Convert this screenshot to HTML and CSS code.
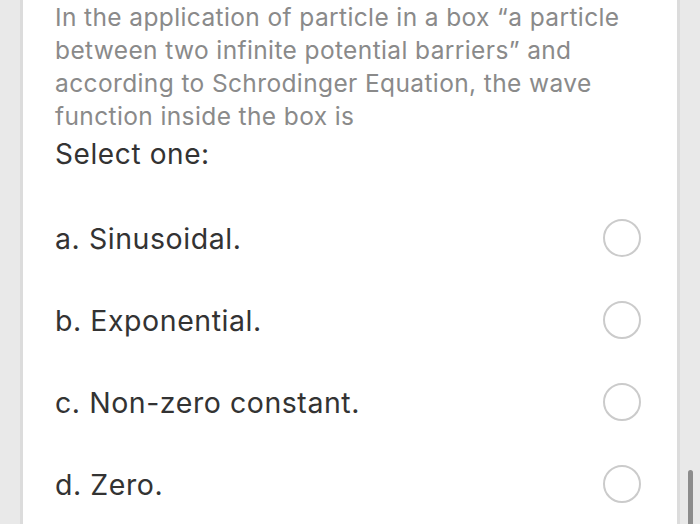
FILE: index.html
```html
<!DOCTYPE html>
<html>
<head>
<meta charset="utf-8">
<link rel="stylesheet" href="styles.css">
</head>
<body>
<div class="page">
  <div class="side side-left"></div>
  <main class="content">
    <div class="question">In the application of particle in a box “a particle between two infinite potential barriers” and according to Schrodinger Equation, the wave function inside the box is</div>
    <div class="prompt">Select one:</div>
    <div class="options">
      <div class="option"><span class="label">a. Sinusoidal.</span><span class="radio"></span></div>
      <div class="option"><span class="label">b. Exponential.</span><span class="radio"></span></div>
      <div class="option"><span class="label">c. Non-zero constant.</span><span class="radio"></span></div>
      <div class="option"><span class="label">d. Zero.</span><span class="radio"></span></div>
    </div>
  </main>
  <div class="side side-right"><div class="scrollbar"></div></div>
</div>
</body>
</html>
```
FILE: styles.css
```css
html, body {
  margin: 0;
  padding: 0;
  background: #ffffff;
}
.page {
  display: flex;
  width: 700px;
  height: 524px;
  overflow: hidden;
  font-family: Inter, "Liberation Sans", sans-serif;
}
.side {
  background: #e9e9e9;
  position: relative;
}
.side-left {
  width: 20px;
  border-right: 3px solid #dcdcdc;
}
.side-right {
  width: 20px;
  border-left: 3px solid #dcdcdc;
}
.scrollbar {
  position: absolute;
  left: 8px;
  top: 470px;
  width: 5px;
  height: 60px;
  border-radius: 3px;
  background: #8c8c8c;
}
.content {
  flex: 1;
  padding: 0 36px 0 32px;
  display: flex;
  flex-direction: column;
}
.question {
  margin-top: 1px;
  font-size: 24.5px;
  line-height: 33px;
  color: #8a8a8a;
  letter-spacing: 0.38px;
}
.prompt {
  font-size: 28px;
  line-height: 36px;
  color: #333333;
  margin-top: 3px;
  letter-spacing: 0.6px;
}
.options {
  display: flex;
  flex-direction: column;
  margin-top: 25px;
}
.option {
  height: 82px;
  display: flex;
  align-items: center;
  justify-content: space-between;
}
.label {
  font-size: 28.5px;
  color: #333333;
  letter-spacing: 0.55px;
}
.radio {
  width: 34px;
  height: 34px;
  border: 2px solid #cbcbcb;
  border-radius: 50%;
}
```
